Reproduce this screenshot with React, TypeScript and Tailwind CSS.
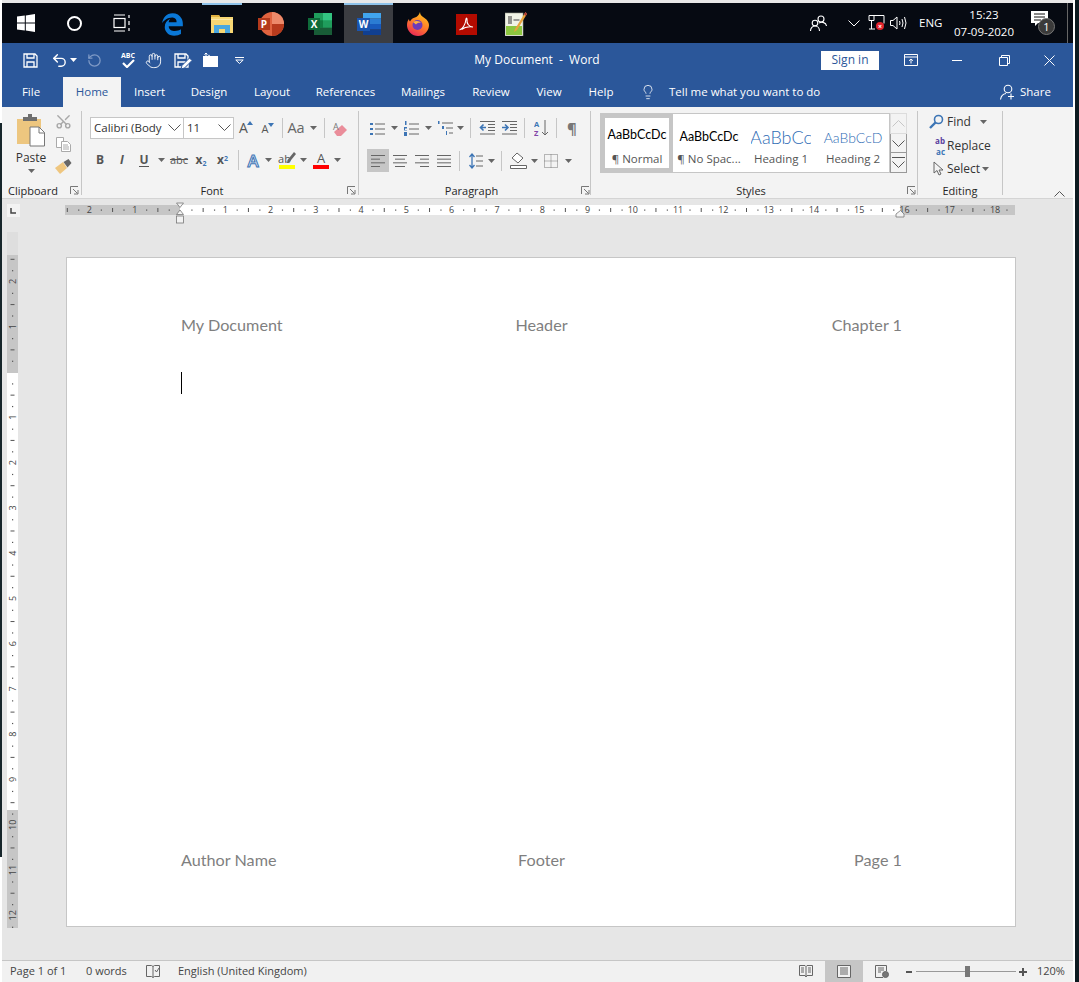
import React from "react";
import { FaEdgeLegacy } from "react-icons/fa6";
import { Hand, Lightbulb, RotateCcw, Scissors, Undo2 } from "lucide-react";

const PX_PER_CM = 45.28;
const BLUE = "#3d75b5";

const Caret = ({ color = "#666" }: { color?: string }) => (
  <svg width="7" height="4" viewBox="0 0 7 4">
    <path d="M0 0h7L3.5 4z" fill={color} />
  </svg>
);

const Launcher = () => (
  <svg width="9" height="9" viewBox="0 0 9 9" fill="none" stroke="#777">
    <path d="M.5 8V.5H8M3 3l4.5 4.5M8 4v4H4" />
  </svg>
);

const Sep = ({ h = "h-[20px]" }: { h?: string }) => <div className={`${h} w-px bg-[#c6c6c6]`} />;

/* ---------- taskbar ---------- */

const Windows = () => (
  <svg width="18" height="18" viewBox="0 0 18 18" fill="#fff">
    <path d="M0 2.6 7.8 1.5v7H0zM8.8 1.4 18 0v8.5H8.8zM0 9.5h7.8v7L0 15.4zM8.8 9.5H18V18l-9.2-1.4z" />
  </svg>
);

const TaskView = () => (
  <svg width="18" height="18" viewBox="0 0 18 18" fill="none" stroke="#fff" strokeWidth="1.2">
    <path d="M1 1h11M1 17h11" />
    <rect x="1" y="4.5" width="11" height="9" />
    <path d="M16 1v3M16 7v4M16 14v3" />
  </svg>
);

const Explorer = () => (
  <svg width="22" height="20" viewBox="0 0 22 20">
    <path d="M0 1h8l1 2h13v16H0z" fill="#f7d774" />
    <path d="M0 1h8l1 2H0z" fill="#e0b040" />
    <path d="M0 5h22v1H0z" fill="#fbe7a6" />
    <path d="M3 19v-8h16v8h-5v-4H8v4z" fill="#4aa8e0" />
  </svg>
);

const Ppt = () => (
  <svg width="26" height="24" viewBox="0 0 26 24">
    <circle cx="14" cy="12" r="12" fill="#e0633f" />
    <path d="M14 12h12a12 12 0 0 1-12 12z" fill="#b83b1d" />
    <path d="M14 0a12 12 0 0 1 12 12H14z" fill="#ed8a6a" />
    <rect x="0" y="6" width="12" height="12" fill="#b33a1c" />
    <text x="6" y="15.5" textAnchor="middle" fontSize="10" fontWeight="700" fill="#fff" fontFamily="Open Sans">P</text>
  </svg>
);

const Excel = () => (
  <svg width="24" height="22" viewBox="0 0 24 22">
    <rect x="6" y="0" width="18" height="22" fill="#1f9d5c" />
    <rect x="15" y="0" width="9" height="7.3" fill="#33c481" />
    <rect x="6" y="7.3" width="9" height="7.4" fill="#107c41" />
    <rect x="6" y="14.7" width="18" height="7.3" fill="#185c37" />
    <rect x="0" y="5" width="12" height="12" fill="#0f6b3a" />
    <text x="6" y="14.5" textAnchor="middle" fontSize="10" fontWeight="700" fill="#fff" fontFamily="Open Sans">X</text>
  </svg>
);

const WordIcon = () => (
  <svg width="24" height="22" viewBox="0 0 24 22">
    <rect x="6" y="0" width="18" height="5.5" fill="#41a5ee" />
    <rect x="6" y="5.5" width="18" height="5.5" fill="#2b7cd3" />
    <rect x="6" y="11" width="18" height="5.5" fill="#185abd" />
    <rect x="6" y="16.5" width="18" height="5.5" fill="#103f91" />
    <rect x="0" y="5" width="13" height="13" fill="#1a55b0" />
    <text x="6.5" y="15" textAnchor="middle" fontSize="10" fontWeight="700" fill="#fff" fontFamily="Open Sans">W</text>
  </svg>
);

const Firefox = () => (
  <svg width="24" height="24" viewBox="0 0 24 24">
    <defs>
      <linearGradient id="ff" x1="0.7" y1="0" x2="0.2" y2="1">
        <stop offset="0" stopColor="#ffc21c" />
        <stop offset="0.5" stopColor="#ff7a2b" />
        <stop offset="1" stopColor="#e8215b" />
      </linearGradient>
    </defs>
    <path d="M14 0c0 3 2 4 4.500 6C22 8.500 23 11 23 13a11 11 0 1 1-22 0c0-3 1-5 2-6 0 1 .5 2 1 2.500C5 7 7 6 9 5.500 11.500 4.500 13 3 14 0z" fill="url(#ff)" />
    <circle cx="11.500" cy="13" r="5" fill="#6e3bb8" />
    <path d="M7 10c3-2 7-1 8 1-2-.5-4 0-5 1.500z" fill="#ffb43a" />
  </svg>
);

const Acrobat = () => (
  <svg width="21" height="21" viewBox="0 0 21 21">
    <rect width="21" height="21" fill="#b30b00" />
    <path d="M3.500 16c3-1 6-5.500 6.500-11 .2-1.500 1.200-1 1 .5-.5 4 2 7.500 6 7.500-4-.5-9 .5-11.500 2.500" fill="none" stroke="#fff" strokeWidth="1.100" />
  </svg>
);

const NoteApp = () => (
  <svg width="22" height="24" viewBox="0 0 22 24">
    <rect x="0" y="1" width="18" height="23" fill="#f1f3e6" stroke="#9aa08c" strokeWidth=".6" />
    <rect x="1" y="14" width="16" height="9" fill="#8cc63f" />
    <path d="M4 4v8M6 4v8M8.500 8h6" stroke="#444" strokeWidth="1.100" />
    <path d="M20.500 0 10 17l-1 3 3-2L22 2z" fill="#e8a33d" />
    <path d="M20.500 0 22 2l-1.500 2-1.500-2z" fill="#a33" />
  </svg>
);

const Tray = () => (
  <div className="ml-auto flex h-full items-center text-white">
    <div className="flex w-[28px] justify-center">
      <svg width="17" height="17" viewBox="0 0 17 17" fill="none" stroke="#fff" strokeWidth="1.100">
        <circle cx="11" cy="4" r="3" />
        <circle cx="5" cy="8" r="2.800" />
        <path d="M.5 16c0-3 2-5 4.500-5s4.500 2 4.500 5M9 8c3-1.500 7-.5 7.500 3" />
      </svg>
    </div>
    <div className="ml-[14px] flex w-[16px] justify-center">
      <svg width="12" height="7" viewBox="0 0 12 7" fill="none" stroke="#fff">
        <path d="m.5.5 5.500 5.500L11.500.5" />
      </svg>
    </div>
    <div className="relative ml-[6px] w-[18px]">
      <svg width="17" height="16" viewBox="0 0 17 16" fill="none" stroke="#fff">
        <path d="M1 .5h15v8M1 .5v5h5v-5M3.500 5.500V14M1 14h6M9 12h2" />
      </svg>
      <div className="absolute top-[7px] left-[8px] flex h-[8px] w-[8px] items-center justify-center rounded-full bg-[#e2242c] text-[7px] leading-none font-bold">×</div>
    </div>
    <div className="ml-[4px] w-[18px]">
      <svg width="17" height="14" viewBox="0 0 17 14" fill="none" stroke="#fff">
        <path d="M.5 4.500h2.500L7 1v12L3 9.500H.5zM9.500 5q1 2 0 4M12 3q2 4 0 8M14.500 1q3 6 0 12" />
      </svg>
    </div>
    <span className="ml-[11px] w-[30px] text-[11.500px] leading-none">ENG</span>
    <div className="flex w-[70px] flex-col items-center text-[11.500px] leading-[17px]">
      <span>15:23</span>
      <span>07-09-2020</span>
    </div>
    <div className="relative mr-[12px] ml-[12px] h-[24px] w-[24px]">
      <svg width="17" height="16" viewBox="0 0 17 16" fill="#fff">
        <path d="M0 0h17v12H7l-3 3v-3H0z" />
        <path d="M3 3h11M3 6h11M3 9h7" stroke="#111" />
      </svg>
      <div className="absolute top-[7px] left-[7px] flex h-[17px] w-[17px] items-center justify-center rounded-full border border-[#777] bg-[#3a3a3a] text-[11px] leading-none">1</div>
    </div>
  </div>
);

const taskIcons = [
  { key: "edge", node: <FaEdgeLegacy size={23} color="#0a78d7" />, bar: "" },
  { key: "explorer", node: <Explorer />, bar: "w-[40px] bg-[#8fc3ea]" },
  { key: "ppt", node: <Ppt />, bar: "" },
  { key: "excel", node: <Excel />, bar: "" },
  { key: "word", node: <WordIcon />, bar: "w-full bg-[#8fc3ea]", active: true },
  { key: "firefox", node: <Firefox />, bar: "" },
  { key: "acrobat", node: <Acrobat />, bar: "" },
  { key: "note", node: <NoteApp />, bar: "" },
];

const Taskbar = () => (
  <div className="flex h-[40px] shrink-0 border-r-[5px] border-[#060a12] bg-[#060a12]">
    <div className="flex w-[48px] items-center justify-center">
      <Windows />
    </div>
    <div className="flex w-[48px] items-center justify-center">
      <div className="h-[15px] w-[15px] rounded-full border-2 border-white" />
    </div>
    <div className="mr-[2px] flex w-[48px] items-center justify-center">
      <TaskView />
    </div>
    {taskIcons.map((t) => (
      <div key={t.key} className={`flex w-[49px] flex-col items-center ${t.active ? "bg-[#3b3d42]" : ""}`}>
        <div className={`h-[2px] ${t.bar}`} />
        <div className="flex flex-1 items-center justify-center">{t.node}</div>
      </div>
    ))}
    <Tray />
    <div className="w-px bg-[#666]" />
  </div>
);

/* ---------- title bar + tabs ---------- */

const Floppy = () => (
  <svg width="15" height="15" viewBox="0 0 15 15" fill="none" stroke="#fff" strokeWidth="1.300">
    <path d="M1 1h11l2 2v11H1z" />
    <path d="M4 1v4h7V1M4 14V9h7v5" />
  </svg>
);

const TitleBar = () => (
  <div className="flex h-[34px] shrink-0 items-center bg-[#2b579a] text-white">
    <div className="ml-[21px] w-[22px]"><Floppy /></div>
    <div className="ml-[6px] flex w-[26px] items-center">
      <Undo2 size={17} strokeWidth={2} />
      <span className="ml-[2px]"><Caret color="#fff" /></span>
    </div>
    <div className="ml-[10px] w-[26px]"><RotateCcw size={15} color="#7f9ac6" strokeWidth={2} /></div>
    <div className="flex w-[30px] flex-col items-center">
      <span className="text-[7px] leading-[7px] font-bold">ABC</span>
      <svg width="13" height="9" viewBox="0 0 13 9" fill="none" stroke="#fff" strokeWidth="2.200">
        <path d="m1 4 4 4 7-7" />
      </svg>
    </div>
    <div className="w-[25px] pl-[2px]"><Hand size={17} strokeWidth={1.300} /></div>
    <div className="relative w-[30px] pl-[6px]">
      <Floppy />
      <svg className="absolute top-[5px] left-[13px]" width="11" height="11" viewBox="0 0 11 11">
        <path d="M8.500 0 11 2.500 3.500 10 0 11l1-3.500z" fill="#fff" stroke="#2b579a" />
      </svg>
    </div>
    <div className="w-[26px] pl-[5px]">
      <svg width="15" height="14" viewBox="0 0 15 14" fill="#fff">
        <path d="M0 3h5l1-1.500 1 1.500h8v11H0z" />
        <path d="M3 0v3M1.500 1.500 3 0l1.500 1.500" stroke="#fff" fill="none" />
      </svg>
    </div>
    <div className="ml-[11px] w-[12px]">
      <svg width="9" height="7" viewBox="0 0 9 7" fill="none" stroke="#fff">
        <path d="M0 .5h9M.8 3h7.400L4.500 6.500z" />
      </svg>
    </div>
    <div className="ml-[225px] w-[130px] text-center text-[12px] whitespace-pre">My Document  -  Word</div>
    <div className="ml-[219px] flex h-[19px] w-[58px] items-center justify-center bg-white text-[12px] text-[#2b579a]">Sign in</div>
    <div className="ml-[25px] w-[14px]">
      <svg width="14" height="12" viewBox="0 0 14 12" fill="none" stroke="#fff">
        <path d="M.5.500h13v11H.5zM.5 3h13M7 9.500V5M5 6.800 7 5l2 1.800" />
      </svg>
    </div>
    <div className="ml-[34px] h-px w-[10px] bg-white" />
    <div className="ml-[37px] w-[11px]">
      <svg width="11" height="11" viewBox="0 0 11 11" fill="none" stroke="#fff">
        <path d="M.5 2.500h8v8h-8zM2.500 2.500v-2h8v8h-2" />
      </svg>
    </div>
    <div className="ml-[34px] w-[11px]">
      <svg width="11" height="11" viewBox="0 0 11 11" fill="none" stroke="#fff">
        <path d="m.5.5 10 10M10.500.5l-10 10" />
      </svg>
    </div>
  </div>
);

const tabs = [
  { label: "File", w: "w-[61px] pr-[3px]" },
  { label: "Home", w: "w-[58px]", active: true },
  { label: "Insert", w: "w-[57px]" },
  { label: "Design", w: "w-[62px]" },
  { label: "Layout", w: "w-[64px]" },
  { label: "References", w: "w-[83px]" },
  { label: "Mailings", w: "w-[72px]" },
  { label: "Review", w: "w-[64px]" },
  { label: "View", w: "w-[52px]" },
  { label: "Help", w: "w-[52px]" },
];

const TabBar = () => (
  <div className="flex h-[30px] shrink-0 items-stretch bg-[#2b579a] text-[11.500px] text-white">
    {tabs.map((t) => (
      <div key={t.label} className={`flex items-center justify-center ${t.w} ${t.active ? "bg-[#f3f3f3] text-[#2b579a]" : ""}`}>
        {t.label}
      </div>
    ))}
    <div className="ml-[13px] flex items-center">
      <Lightbulb size={16} strokeWidth={1.200} />
    </div>
    <div className="ml-[13px] flex w-[331px] items-center">Tell me what you want to do</div>
    <div className="flex items-center">
      <svg width="16" height="16" viewBox="0 0 16 16" fill="none" stroke="#fff" strokeWidth="1.100">
        <circle cx="8" cy="5" r="3.800" />
        <path d="M.5 15.500C1 12 3 10 6 9.500M11 9.500v6M8 12.500h6" />
      </svg>
      <span className="ml-[4px]">Share</span>
    </div>
  </div>
);

/* ---------- ribbon ---------- */

const Paste = () => (
  <svg width="30" height="33" viewBox="0 0 30 33">
    <path d="M1 5h24v25H1z" fill="#edc67f" />
    <path d="M7 7V3h5V0h4v3h5v4z" fill="#6e6e6e" />
    <path d="M14 13h9l5.500 5.500V32H14z" fill="#fff" stroke="#777" />
    <path d="M23 13v6h5.500" fill="none" stroke="#777" />
  </svg>
);

const CopyIcon = () => (
  <svg width="15" height="15" viewBox="0 0 15 15" fill="#fff" stroke="#aaa">
    <path d="M.5.500h7v10h-7z" />
    <path d="M5.500 4.500h6l3 3v7h-9z" />
    <path d="M7 8h5M7 10h6M7 12h6" fill="none" />
  </svg>
);

const Painter = () => (
  <svg width="17" height="15" viewBox="0 0 17 15">
    <path d="M0 9 8 3l4 6-7 6z" fill="#efc67f" />
    <path d="m8.500 3 5-3 3 4-4 4.500z" fill="#666" />
  </svg>
);

const Eraser = () => (
  <svg width="16" height="17" viewBox="0 0 16 17">
    <path d="M2 12 10 5l5 5-6 6H5z" fill="#ea8d9a" />
    <text x="1" y="10" fontSize="9" fill="#777" fontFamily="Open Sans">A</text>
  </svg>
);

const Lines = ({ rows }: { rows: [number, number][] }) => (
  <svg width="16" height="14" viewBox="0 0 16 14" fill="none" stroke="#666">
    {rows.map(([a, b], i) => (
      <path key={i} d={`M${a} ${1.5 + i * (11 / (rows.length - 1))}H${b}`} />
    ))}
  </svg>
);

const ListIcon = ({ kind }: { kind: "bullet" | "number" | "multi" }) => (
  <svg width="15" height="15" viewBox="0 0 15 15" fill="none">
    {kind === "bullet" && <path d="M0 2h3v2H0zM0 7h3v2H0zM0 12h3v2H0z" fill={BLUE} />}
    {kind === "number" && <path d="M1 0h1.500v4H1zM0 6h3v1.500H1V9h2v.5H0zM0 11h3v4H0z" fill={BLUE} />}
    {kind === "multi" && <path d="M0 0h1.500v3H0zM4 5h2v3H4zM8 10h1v4H8z" fill={BLUE} />}
    {kind === "multi" ? (
      <path d="M4 2h11M8 7h7M11 12h4" stroke="#666" />
    ) : (
      <path d="M5 3h10M5 8h10M5 13h10" stroke="#666" />
    )}
  </svg>
);

const IndentIcon = ({ out }: { out?: boolean }) => (
  <svg width="16" height="14" viewBox="0 0 16 14" fill="none">
    <path d="M1 .5h15M9 3.500h7M9 6.500h7M9 9.500h7M1 13h15" stroke="#666" />
    <path d={out ? "M7 6.500H2M4.500 3.500 1.500 6.500l3 3" : "M1 6.500h5M4 3.500l3 3-3 3"} stroke={BLUE} strokeWidth="1.600" />
  </svg>
);

const Cell = ({ w, children }: { w: string; children: React.ReactNode }) => (
  <div className={`flex h-[22px] items-center justify-center ${w}`}>{children}</div>
);

const Clipboard = () => (
  <div className="flex h-[84px] w-[80px] shrink-0 flex-col border-r border-[#c6c6c6]">
    <div className="flex h-[69px] text-[12px]">
      <div className="flex w-[56px] flex-col items-center pt-[3px] pl-[2px]">
        <Paste />
        <span className="mt-[2px] leading-[17px] text-[#333]">Paste</span>
        <span className="mt-[3px]"><Caret /></span>
      </div>
      <div className="-ml-[3px] flex flex-col items-center gap-[7px] pt-[2px]">
        <Scissors size={17} color="#a8a8a8" className="-rotate-90" />
        <CopyIcon />
        <Painter />
      </div>
    </div>
    <div className="flex h-[15px] items-center pt-[6px] pl-[6px] text-[11px] leading-none text-[#262626]">
      <span className="w-[62px]">Clipboard</span>
      <Launcher />
    </div>
  </div>
);

const FontGroup = () => (
  <div className="flex h-[84px] w-[277px] shrink-0 flex-col border-r border-[#c6c6c6] pl-[7px]">
    <div className="mt-[6px] flex h-[22px] items-center">
      <div className="ml-[1px] flex h-[22px] w-[94px] items-center justify-between border border-[#c6c6c6] bg-white pr-[2px] pl-[3px] text-[11.500px] text-[#333]">
        <span className="overflow-hidden whitespace-nowrap">Calibri (Body</span>
        <svg className="shrink-0" width="13" height="8" viewBox="0 0 13 8" fill="none" stroke="#555">
          <path d="m.5.5 6 6 6-6" />
        </svg>
      </div>
      <div className="flex h-[22px] w-[50px] items-center justify-between border border-l-0 border-[#c6c6c6] bg-white pr-[2px] pl-[3px] text-[11.500px] text-[#333]">
        <span>11</span>
        <svg width="13" height="8" viewBox="0 0 13 8" fill="none" stroke="#555">
          <path d="m.5.5 6 6 6-6" />
        </svg>
      </div>
      <Cell w="w-[22px] ml-[1px]">
        <div className="flex items-start text-[14px] leading-none text-[#555]">A<span className="-ml-[1px]"><svg width="6" height="4" viewBox="0 0 6 4"><path d="M0 4h6L3 0z" fill={BLUE} /></svg></span></div>
      </Cell>
      <Cell w="w-[22px]">
        <div className="flex items-start text-[11px] leading-none text-[#555]">A<span><svg width="6" height="4" viewBox="0 0 6 4"><path d="M0 0h6L3 4z" fill={BLUE} /></svg></span></div>
      </Cell>
      <div className="ml-[3px]"><Sep /></div>
      <Cell w="w-[34px] gap-[5px] ml-[1px] pl-[2px]">
        <span className="text-[14.500px] leading-none text-[#666]">Aa</span>
        <Caret />
      </Cell>
      <div className="ml-[6px]"><Sep /></div>
      <Cell w="w-[22px] ml-[4px]"><Eraser /></Cell>
    </div>
    <div className="mt-[10px] flex h-[22px] items-center text-[#555]">
      <Cell w="w-[22px]"><span className="text-[12px] font-bold">B</span></Cell>
      <Cell w="w-[22px]"><span className="text-[12px] font-bold italic">I</span></Cell>
      <Cell w="w-[22px]"><span className="border-b border-[#555] text-[12px] leading-[13px] font-bold">U</span></Cell>
      <Cell w="w-[12px]"><Caret /></Cell>
      <Cell w="w-[22px] ml-[1px]"><span className="text-[11px] line-through">abc</span></Cell>
      <Cell w="w-[22px]"><span className="text-[12px] font-bold">x<sub className="text-[7px] text-[#3d75b5]">2</sub></span></Cell>
      <Cell w="w-[21px]"><span className="text-[12px] font-bold">x<sup className="text-[7px] text-[#3d75b5]">2</sup></span></Cell>
      <div className="ml-[5px]"><Sep /></div>
      <Cell w="w-[22px] ml-[3px]">
        <span className="text-[17px] leading-none font-semibold text-[#dfe9f5] [-webkit-text-stroke:1px_#3d75b5]">A</span>
      </Cell>
      <Cell w="w-[8px]"><Caret /></Cell>
      <Cell w="w-[22px] ml-[4px]">
        <div className="relative flex flex-col items-center">
          <span className="pr-[5px] text-[11px] leading-[13px] text-[#555]">ab</span>
          <svg className="absolute top-0 right-0" width="9" height="11" viewBox="0 0 9 11">
            <path d="M7 0 9 2 2.500 10 0 11l.5-3z" fill="#666" />
          </svg>
          <div className="h-[4px] w-[16px] bg-[#ffff00]" />
        </div>
      </Cell>
      <Cell w="w-[10px]"><Caret /></Cell>
      <Cell w="w-[22px] ml-[2px]">
        <div className="flex flex-col items-center">
          <span className="text-[13px] leading-[13px] text-[#555]">A</span>
          <div className="h-[4px] w-[16px] bg-[#ff0000]" />
        </div>
      </Cell>
      <Cell w="w-[10px]"><Caret /></Cell>
    </div>
    <div className="mt-auto flex h-[15px] items-center pt-[6px] text-[11px] leading-none text-[#262626]">
      <span className="w-[258px] pr-[12px] text-center">Font</span>
      <Launcher />
    </div>
  </div>
);

const Paragraph = () => (
  <div className="flex h-[84px] w-[232px] shrink-0 flex-col border-r border-[#c6c6c6] pl-[8px]">
    <div className="mt-[6px] flex h-[22px] items-center">
      <Cell w="w-[21px]"><ListIcon kind="bullet" /></Cell>
      <Cell w="w-[12px]"><Caret /></Cell>
      <Cell w="w-[22px]"><ListIcon kind="number" /></Cell>
      <Cell w="w-[12px]"><Caret /></Cell>
      <Cell w="w-[22px]"><ListIcon kind="multi" /></Cell>
      <Cell w="w-[8px]"><Caret /></Cell>
      <div className="ml-[6px]"><Sep /></div>
      <Cell w="w-[22px] ml-[5px]"><IndentIcon out /></Cell>
      <Cell w="w-[22px]"><IndentIcon /></Cell>
      <div className="ml-[4px]"><Sep /></div>
      <Cell w="w-[22px] ml-[5px]">
        <svg width="15" height="17" viewBox="0 0 15 17" fill="none">
          <text x="0" y="7" fontSize="7.500" fontWeight="700" fill={BLUE} fontFamily="Open Sans">A</text>
          <text x="0" y="16" fontSize="7.500" fontWeight="700" fill="#8246a8" fontFamily="Open Sans">Z</text>
          <path d="M11 0v15M8 12l3 3 3-3" stroke="#666" />
        </svg>
      </Cell>
      <div className="ml-[4px]"><Sep /></div>
      <Cell w="w-[22px] ml-[4px]"><span className="text-[15px] font-bold text-[#777]">¶</span></Cell>
    </div>
    <div className="mt-[10px] flex h-[23px] items-center">
      <div className="flex h-[23px] w-[22px] items-center justify-center bg-[#c6c6c6]">
        <Lines rows={[[1, 15], [1, 10], [1, 15], [1, 10]]} />
      </div>
      <Cell w="w-[22px]"><Lines rows={[[1, 15], [3, 13], [1, 15], [3, 13]]} /></Cell>
      <Cell w="w-[22px]"><Lines rows={[[1, 15], [6, 15], [1, 15], [6, 15]]} /></Cell>
      <Cell w="w-[22px]"><Lines rows={[[1, 15], [1, 15], [1, 15], [1, 15]]} /></Cell>
      <div className="ml-[4px]"><Sep /></div>
      <Cell w="w-[22px] ml-[5px]">
        <svg width="14" height="16" viewBox="0 0 14 16" fill="none">
          <path d="M3 1v14M.5 4 3 1l2.500 3M.5 12 3 15l2.500-3" stroke={BLUE} strokeWidth="1.300" />
          <path d="M7 3h7M7 8h7M7 13h7" stroke="#666" />
        </svg>
      </Cell>
      <Cell w="w-[8px]"><Caret /></Cell>
      <div className="ml-[6px]"><Sep /></div>
      <Cell w="w-[22px] ml-[5px]">
        <svg width="17" height="17" viewBox="0 0 17 17" fill="none" stroke="#666">
          <path d="m7 1 6 5-5 5-6-5z" fill="#fff" />
          <path d="M.5 13.500h16v3H.5z" fill="#fff" />
        </svg>
      </Cell>
      <Cell w="w-[10px]"><Caret /></Cell>
      <Cell w="w-[24px]">
        <svg width="14" height="14" viewBox="0 0 14 14" fill="none" stroke="#777" strokeDasharray="1 1">
          <path d="M.5.500h13v13H.5zM7 .5v13M.5 7h13" />
        </svg>
      </Cell>
      <Cell w="w-[10px]"><Caret /></Cell>
    </div>
    <div className="mt-auto flex h-[15px] items-center pt-[6px] text-[11px] leading-none text-[#262626]">
      <span className="w-[210px] text-center">Paragraph</span>
      <span className="ml-[5px]"><Launcher /></span>
    </div>
  </div>
);

const styles = [
  { label: "¶ No Spac...", preview: "AaBbCcDc", cls: "text-[12.500px] text-black font-['Lato',sans-serif]" },
  { label: "Heading 1", preview: "AaBbCc", cls: "text-[18px] font-light text-[#2f6db5] font-['Lato',sans-serif]" },
  { label: "Heading 2", preview: "AaBbCcD", cls: "text-[14px] font-light text-[#2f6db5] font-['Lato',sans-serif]" },
];

const Styles = () => (
  <div className="flex h-[84px] w-[327px] shrink-0 flex-col border-r border-[#c6c6c6]">
    <div className="mt-[2px] ml-[9px] flex h-[60px] w-[307px]">
      <div className="flex flex-1 border border-[#c6c6c6] bg-white">
        <div className="flex w-[72px] flex-col items-center border-[4px] border-[#c6c6c6] pt-[8px]">
          <div className="h-[22px] w-[60px] overflow-hidden text-center font-['Lato',sans-serif] text-[12.500px] whitespace-nowrap text-black">AaBbCcDc</div>
          <div className="mt-[2px] text-[11.500px] text-[#555]">¶ Normal</div>
        </div>
        {styles.map((s) => (
          <div key={s.label} className="flex w-[72px] flex-col items-center pt-[12px]">
            <div className={`flex h-[22px] w-[60px] items-center justify-center overflow-hidden whitespace-nowrap ${s.cls}`}>{s.preview}</div>
            <div className="mt-[2px] text-[11.500px] whitespace-nowrap text-[#555]">{s.label}</div>
          </div>
        ))}
      </div>
      <div className="flex w-[18px] flex-col">
        <div className="flex h-[21px] items-center justify-center border border-[#dcdcdc]">
          <svg width="13" height="7" viewBox="0 0 13 7" fill="none" stroke="#c6c6c6"><path d="m.5 6.500 6-6 6 6" /></svg>
        </div>
        <div className="flex h-[19px] items-center justify-center border border-t-0 border-[#999]">
          <svg width="13" height="7" viewBox="0 0 13 7" fill="none" stroke="#555"><path d="m.5.5 6 6 6-6" /></svg>
        </div>
        <div className="flex h-[20px] flex-col items-center justify-center gap-[3px] border border-t-0 border-[#999]">
          <div className="h-px w-[13px] bg-[#555]" />
          <svg width="13" height="7" viewBox="0 0 13 7" fill="none" stroke="#555"><path d="m.5.5 6 6 6-6" /></svg>
        </div>
      </div>
    </div>
    <div className="mt-auto flex h-[15px] items-center pt-[6px] text-[11px] leading-none text-[#262626]">
      <span className="w-[316px] pl-[4px] text-center">Styles</span>
      <Launcher />
    </div>
  </div>
);

const Editing = () => (
  <div className="flex h-[84px] w-[85px] shrink-0 flex-col border-r border-[#c6c6c6] text-[12px] text-[#333]">
    <div className="flex h-[23px] items-center pb-[2px]">
      <div className="flex w-[29px] justify-end pr-[3px]">
        <svg width="15" height="15" viewBox="0 0 15 15" fill="none" stroke={BLUE} strokeWidth="1.600">
          <circle cx="9.500" cy="5.500" r="4" />
          <path d="M6.500 8.500 1 14" strokeWidth="2.400" />
        </svg>
      </div>
      <span>Find</span>
      <span className="ml-[9px]"><Caret /></span>
    </div>
    <div className="flex h-[23px] items-center">
      <div className="flex w-[29px] justify-end pr-[2px]">
        <div className="flex flex-col items-end text-[8px] leading-[11px] font-bold">
          <span className="text-[#5a3f9e]">ab</span>
          <span className="text-[#3d75b5]">ac</span>
        </div>
      </div>
      <span>Replace</span>
    </div>
    <div className="flex h-[23px] items-center">
      <div className="flex w-[29px] justify-end pr-[3px]">
        <svg width="11" height="15" viewBox="0 0 11 15" fill="#f3f3f3" stroke="#666">
          <path d="M1 1v11l3-2.500 2 4.500 2-1-2-4h4z" />
        </svg>
      </div>
      <span>Select</span>
      <span className="ml-[2px]"><Caret /></span>
    </div>
    <div className="mt-auto flex h-[15px] items-center justify-center pt-[6px] text-[11px] leading-none text-[#262626]">Editing</div>
  </div>
);

const Ribbon = () => (
  <div className="flex h-[92px] shrink-0 border-b border-[#d4d4d4] bg-[#f3f3f3] pt-[4px]">
    <Clipboard />
    <FontGroup />
    <Paragraph />
    <Styles />
    <Editing />
    <div className="flex flex-1 items-end justify-end pr-[8px] pb-[1px]">
      <svg width="11" height="6" viewBox="0 0 11 6" fill="none" stroke="#555">
        <path d="m.5 5.500 5-5 5 5" />
      </svg>
    </div>
  </div>
);

/* ---------- rulers ---------- */

const HorizontalRuler = () => {
  const zero = 115;
  const marks: React.ReactNode[] = [];
  for (let q = -10; q <= 74; q++) {
    const x = zero + (q / 4) * PX_PER_CM;
    if (x < 0 || x > 948) continue;
    if (q % 4 === 0) {
      if (q !== 0)
        marks.push(
          <text key={q} x={x} y={14} textAnchor="middle" fontSize="9" fill="#444" fontFamily="Open Sans">{Math.abs(q / 4)}</text>,
        );
    } else if (q % 2 === 0) {
      marks.push(<rect key={q} x={x} y={9} width="1" height="4" fill="#555" />);
    } else {
      marks.push(<rect key={q} x={x} y={10.500} width="1.200" height="1.200" fill="#555" />);
    }
  }
  return (
    <svg className="ml-[45px]" width="952" height="25" viewBox="0 0 952 25">
      <rect x="0" y="6" width="115" height="10" fill="#c6c6c6" />
      <rect x="115" y="6" width="720" height="10" fill="#fff" />
      <rect x="835" y="6" width="115" height="10" fill="#c6c6c6" />
      {marks}
      <path d="M111.500 4h7l-3.500 4.500zM111.500 15.500h7L115 11z" fill="#f3f3f3" stroke="#777" strokeWidth=".8" />
      <rect x="111.500" y="17" width="7" height="7" fill="#f3f3f3" stroke="#777" strokeWidth=".8" />
      <path d="M835.500 11.500 839 15v3h-8v-3z" fill="#f3f3f3" stroke="#777" strokeWidth=".8" />
    </svg>
  );
};

const VerticalRuler = () => {
  const zero = 117;
  const marks: React.ReactNode[] = [];
  for (let q = -10; q <= 49; q++) {
    const y = zero + (q / 4) * PX_PER_CM;
    if (y < 0 || y > 672) continue;
    if (q % 4 === 0) {
      if (q !== 0)
        marks.push(
          <text key={q} x="5.500" y={y} textAnchor="middle" dominantBaseline="central" fontSize="9" fill="#444" fontFamily="Open Sans" transform={`rotate(-90 5.500 ${y})`}>{Math.abs(q / 4)}</text>,
        );
    } else if (q % 2 === 0) {
      marks.push(<rect key={q} x="3.500" y={y} width="4" height="1" fill="#555" />);
    } else {
      marks.push(<rect key={q} x="5" y={y} width="1.200" height="1.200" fill="#555" />);
    }
  }
  return (
    <svg width="11" height="673" viewBox="0 0 11 673">
      <rect x="0" y="0" width="11" height="118" fill="#c6c6c6" />
      <rect x="0" y="118" width="11" height="437" fill="#fff" />
      <rect x="0" y="555" width="11" height="118" fill="#c6c6c6" />
      {marks}
    </svg>
  );
};

const DocText = ({ a, b, c }: { a: string; b: string; c: string }) => (
  <div className="grid h-[22px] grid-cols-3 items-center font-['Lato',sans-serif] text-[16.200px] text-[#7f7f7f]">
    <span>{a}</span>
    <span className="text-center">{b}</span>
    <span className="text-right">{c}</span>
  </div>
);

const Document = () => (
  <div className="flex flex-1 bg-[#e6e6e6]">
    <div className="ml-[5px] flex w-[11px] flex-col pt-[8px]">
      <div className="h-[23px] bg-[#dedede]" />
      <VerticalRuler />
    </div>
    <div className="mt-[33px] ml-[48px] flex h-[670px] w-[950px] flex-col border border-[#c6c6c6] bg-white pt-[55px] pr-[113px] pb-[56px] pl-[114px]">
      <DocText a="My Document" b="Header" c="Chapter 1" />
      <div className="mt-[37px] h-[22px] w-px bg-black" />
      <div className="mt-auto">
        <DocText a="Author Name" b="Footer" c="Page 1" />
      </div>
    </div>
  </div>
);

/* ---------- status bar ---------- */

const StatusBar = () => (
  <div className="flex h-[22px] shrink-0 items-center border-t border-[#c6c6c6] bg-[#f1f1f1] text-[11px] text-[#444]">
    <span className="ml-[8px] w-[76px]">Page 1 of 1</span>
    <span className="w-[60px]">0 words</span>
    <svg width="14" height="13" viewBox="0 0 14 13" fill="none" stroke="#666">
      <path d="M.5.500h5l1.500 1v11l-1.500-1h-5zM7 1.500 8.500.5h5v11h-5L7 12.500" />
      <path d="m9 5 1.500 2 2.500-4" />
    </svg>
    <span className="ml-[18px] w-[617px]">English (United Kingdom)</span>
    <div className="flex w-[22px] justify-center">
      <svg width="14" height="13" viewBox="0 0 14 13" fill="none" stroke="#666">
        <path d="M.5.500h5.500l1 1 1-1h5.500v10H8l-1 1.500-1-1.500H.5zM7 1.500V12M2 3h3M2 5h3M2 7h3M9 3h3M9 5h3M9 7h3" />
      </svg>
    </div>
    <div className="ml-[8px] flex h-full w-[38px] items-center justify-center bg-[#c6c6c6]">
      <svg width="14" height="13" viewBox="0 0 14 13" fill="#f1f1f1" stroke="#666">
        <path d="M.5.500h13v12H.5zM3 3h8M3 5h8M3 7h8M3 9h8" />
      </svg>
    </div>
    <div className="ml-[10px] flex w-[18px] justify-center">
      <svg width="14" height="13" viewBox="0 0 14 13" fill="none" stroke="#666">
        <path d="M8 12.500H.5V.5h11V6M3 3h6M3 5h6M3 7h3" />
        <circle cx="10.500" cy="9.500" r="3" fill="#777" />
      </svg>
    </div>
    <div className="ml-[15px] h-[2px] w-[6px] bg-[#555]" />
    <div className="relative ml-[4px] h-px w-[100px] bg-[#999]">
      <div className="absolute -top-[5px] left-[49px] h-[11px] w-[5px] bg-[#777]" />
    </div>
    <svg className="ml-[3px]" width="8" height="8" viewBox="0 0 8 8" stroke="#555" strokeWidth="2">
      <path d="M4 0v8M0 4h8" />
    </svg>
    <span className="ml-[10px]">120%</span>
  </div>
);

export default function App() {
  return (
    <div className="flex h-[982px] w-[1079px] overflow-hidden bg-white font-['Open_Sans',sans-serif]">
      <div className="flex w-[2px] shrink-0 flex-col">
        <div className="h-[123px] bg-white" />
        <div className="h-[734px] bg-[#17262b]" />
      </div>
      <div className="flex w-[1071px] shrink-0 flex-col">
        <div className="h-[3px] shrink-0 bg-[#e8e8e8]" />
        <Taskbar />
        <TitleBar />
        <TabBar />
        <Ribbon />
        <div className="flex h-[25px] shrink-0 items-start bg-[#e6e6e6]">
          <div className="mt-[5px] ml-[5px] flex h-[13px] w-[13px] items-center justify-center bg-[#f3f3f3]">
            <svg width="7" height="7" viewBox="0 0 7 7" fill="none" stroke="#444" strokeWidth="1.500"><path d="M1 1v5h5" /></svg>
          </div>
          <HorizontalRuler />
        </div>
        <Document />
        <StatusBar />
      </div>
      <div className="w-[2px] shrink-0 bg-white" />
      <div className="w-[4px] shrink-0 bg-[#0d1a20]" />
    </div>
  );
}
